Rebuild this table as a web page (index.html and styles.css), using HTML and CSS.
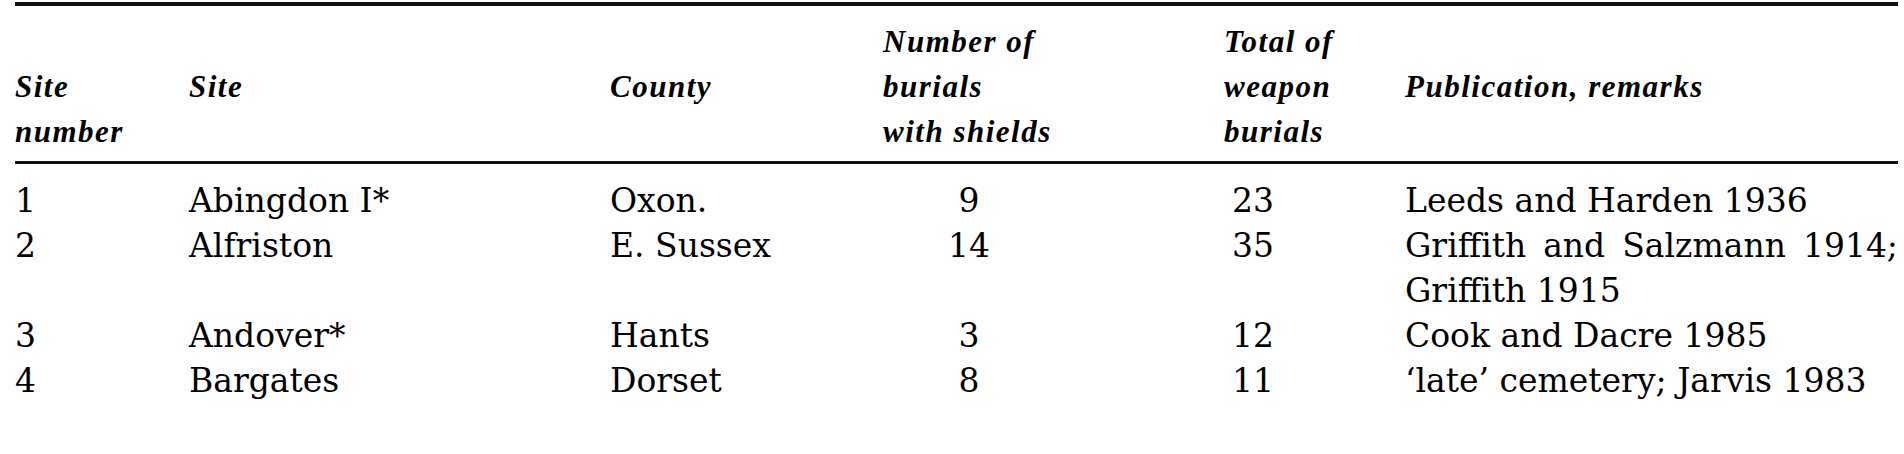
FILE: index.html
```html
<!DOCTYPE html>
<html lang="en">
<head>
<meta charset="utf-8">
<title>Shield burials</title>
<link rel="stylesheet" href="styles.css">
</head>
<body>
<div class="table">
  <div class="head">
    <div class="h h1">Site<br>number</div>
    <div class="h h2">Site</div>
    <div class="h h3">County</div>
    <div class="h h4">Number of<br>burials<br>with shields</div>
    <div class="h h5">Total of<br>weapon<br>burials</div>
    <div class="h h6">Publication, remarks</div>
  </div>
  <div class="body">
    <div class="row">
      <div class="c">1</div><div class="c">Abingdon I*</div><div class="c">Oxon.</div>
      <div class="c n4">9</div><div class="c n5">23</div>
      <div class="c">Leeds and Harden 1936</div>
    </div>
    <div class="row">
      <div class="c">2</div><div class="c">Alfriston</div><div class="c">E. Sussex</div>
      <div class="c n4">14</div><div class="c n5">35</div>
      <div class="c"><div class="just">Griffith and Salzmann 1914;</div><div>Griffith 1915</div></div>
    </div>
    <div class="row">
      <div class="c">3</div><div class="c">Andover*</div><div class="c">Hants</div>
      <div class="c n4">3</div><div class="c n5">12</div>
      <div class="c">Cook and Dacre 1985</div>
    </div>
    <div class="row">
      <div class="c">4</div><div class="c">Bargates</div><div class="c">Dorset</div>
      <div class="c n4">8</div><div class="c n5">11</div>
      <div class="c">‘late’ cemetery; Jarvis 1983</div>
    </div>
  </div>
</div>
</body>
</html>
```

FILE: styles.css
```css
html, body {
  margin: 0;
  padding: 0;
  background: #fff;
}

.table {
  margin: 2px 6px 0 15px;
  color: #000;
}

.head,
.row {
  display: grid;
  grid-template-columns: 174px 421px 273px 341px 181px 1fr;
}

.head {
  border-top: 4px solid #111;
  border-bottom: 3px solid #111;
  padding: 13px 0 7px;
  height: 135px;
  font-family: "Liberation Serif", serif;
  font-style: italic;
  font-weight: bold;
  font-size: 31px;
  letter-spacing: 1.5px;
  line-height: 45px;
}

.h1 {
  align-self: end;
}

.h2, .h3, .h6 {
  align-self: center;
}

.h4, .h5 {
  align-self: end;
}

.body {
  padding-top: 14px;
  font-family: "DejaVu Serif", serif;
  font-size: 33px;
  line-height: 45px;
}

.n4 {
  width: 172px;
  text-align: center;
}

.n5 {
  width: 58px;
  text-align: center;
}

.just {
  text-align: justify;
  text-align-last: justify;
}
```
